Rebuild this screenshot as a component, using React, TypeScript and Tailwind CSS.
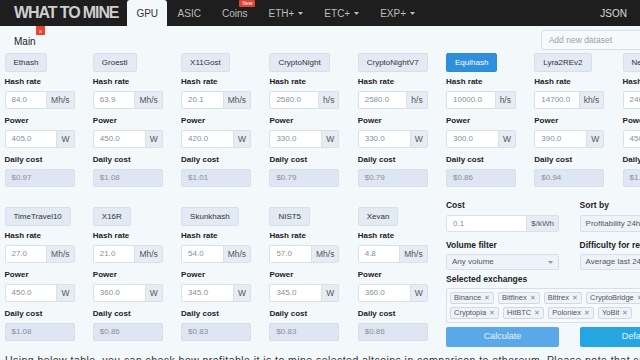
import React from 'react';

type Algo = {
  name: string;
  hash: string;
  unit: string;
  power: string;
  cost: string;
  active?: boolean;
};

const row1: Algo[] = [
  { name: 'Ethash', hash: '84.0', unit: 'Mh/s', power: '405.0', cost: '$0.97' },
  { name: 'Groestl', hash: '63.9', unit: 'Mh/s', power: '450.0', cost: '$1.08' },
  { name: 'X11Gost', hash: '20.1', unit: 'Mh/s', power: '420.0', cost: '$1.01' },
  { name: 'CryptoNight', hash: '2580.0', unit: 'h/s', power: '330.0', cost: '$0.79' },
  { name: 'CryptoNightV7', hash: '2580.0', unit: 'h/s', power: '330.0', cost: '$0.79' },
  { name: 'Equihash', hash: '10000.0', unit: 'h/s', power: '300.0', cost: '$0.86', active: true },
  { name: 'Lyra2REv2', hash: '14700.0', unit: 'kh/s', power: '390.0', cost: '$0.94' },
  { name: 'NeoScrypt', hash: '2460.0', unit: 'kh/s', power: '450.0', cost: '$1.08' },
];

const row2: Algo[] = [
  { name: 'TimeTravel10', hash: '27.0', unit: 'Mh/s', power: '450.0', cost: '$1.08' },
  { name: 'X16R', hash: '21.0', unit: 'Mh/s', power: '360.0', cost: '$0.86' },
  { name: 'Skunkhash', hash: '54.0', unit: 'Mh/s', power: '345.0', cost: '$0.83' },
  { name: 'NIST5', hash: '57.0', unit: 'Mh/s', power: '345.0', cost: '$0.83' },
  { name: 'Xevan', hash: '4.8', unit: 'Mh/s', power: '360.0', cost: '$0.86' },
];

const exchanges1 = ['Binance', 'Bitfinex', 'Bittrex', 'CryptoBridge'];
const exchanges2 = ['Cryptopia', 'HitBTC', 'Poloniex', 'YoBit'];

function Caret() {
  return (
    <svg width="5" height="3" viewBox="0 0 5 3" className="ml-[4px] inline-block">
      <path d="M0 0h5L2.5 3z" fill="currentColor" />
    </svg>
  );
}

function InputGroup({ value, unit }: { value: string; unit: string }) {
  return (
    <div className="flex h-[18px] w-full rounded-[2px] border border-[#d8e0ea] overflow-hidden">
      <div className="flex-1 bg-white pl-[6px] flex items-center text-[8px] text-[#8a8f95]">{value}</div>
      <div className="flex items-center border-l border-[#d8e0ea] bg-[#e6ecf4] px-[4px] text-[8.5px] text-[#555]">
        {unit}
      </div>
    </div>
  );
}

function Label({ children, first }: { children: React.ReactNode; first?: boolean }) {
  return (
    <div
      className={
        (first ? 'mt-[4px] mb-[3px]' : 'mt-[6px] mb-[3px]') +
        ' h-[12px] leading-[12px] text-[8px] font-bold text-[#222] whitespace-nowrap'
      }
    >
      {children}
    </div>
  );
}

function AlgoCard({ a, top }: { a: Algo; top?: boolean }) {
  return (
    <div className={'w-[70px] ' + (top ? 'pt-[6px]' : '')}>
      <div
        className={
          'flex w-fit h-[19px] items-center rounded-[2px] border px-[8px] text-[8px] whitespace-nowrap ' +
          (a.active
            ? 'border-[#2b8bd6] bg-[#2e90dc] text-white'
            : 'border-[#d6dfeb] bg-[#e2eaf4] text-[#333]')
        }
      >
        {a.name}
      </div>
      <Label first>Hash rate</Label>
      <InputGroup value={a.hash} unit={a.unit} />
      <Label>Power</Label>
      <InputGroup value={a.power} unit="W" />
      <Label>Daily cost</Label>
      <div className="flex h-[18px] items-center rounded-[2px] border border-[#d6dfeb] bg-[#dde6f2] pl-[6px] text-[8px] text-[#8a8f95]">
        {a.cost}
      </div>
    </div>
  );
}

function Tag({ name }: { name: string }) {
  return (
    <span className="inline-flex h-[12px] items-center gap-[3px] rounded-[2px] border border-[#cfd8e3] bg-[#eef3f9] px-[3px] text-[7.5px] text-[#555] whitespace-nowrap">
      {name}
      <span className="text-[#888] text-[7px]">✕</span>
    </span>
  );
}

function SelectBox({ text, caret }: { text: string; caret?: boolean }) {
  return (
    <div className="flex h-[16px] items-center justify-between rounded-[2px] border border-[#d6dfeb] bg-[#eef3f9] px-[5px] text-[8px] text-[#555] whitespace-nowrap">
      {text}
      {caret && (
        <svg width="5" height="3" viewBox="0 0 5 3" className="text-[#999]">
          <path d="M0 0h5L2.5 3z" fill="currentColor" />
        </svg>
      )}
    </div>
  );
}

function PanelLabel({ children }: { children: React.ReactNode }) {
  return (
    <div className="h-[12px] leading-[12px] text-[8.5px] font-bold text-[#222] whitespace-nowrap">{children}</div>
  );
}

export default function App() {
  const tabs = ['ASIC', 'Coins', 'ETH+', 'ETC+', 'EXP+'];

  return (
    <div className="relative h-[360px] w-[640px] overflow-hidden bg-[#f3f8fb] [font-family:'Liberation_Sans',Arial,sans-serif]">
      {/* navbar */}
      <div className="flex h-[26px] w-[640px] items-stretch bg-[#1e1e1e]">
        <div className="ml-[14px] mr-[9px] flex items-center text-[16px] font-bold tracking-[-1.1px] text-[#cfcfcf]">
          WHAT TO MINE
        </div>
        <div className="flex items-center rounded-t-[3px] bg-[#f3f8fb] px-[9px] text-[10px] text-[#333]">GPU</div>
        {tabs.map((t) => (
          <div key={t} className="relative flex items-center px-[10.5px] text-[10px] text-[#bdbdbd]">
            {t}
            {t.endsWith('+') && <Caret />}
            {t === 'Coins' && (
              <span className="absolute left-[28px] top-0 rounded-[1px] bg-[#dc4437] px-[3px] text-[5px] leading-[7px] text-white">
                New
              </span>
            )}
          </div>
        ))}
        <div className="ml-auto mr-[13px] flex items-center text-[10px] text-[#dcdcdc]">JSON</div>
      </div>

      {/* dataset tabs */}
      <div className="flex h-[27px] w-[720px] items-start">
        <div className="relative ml-[14px] mt-[10px] text-[10px] leading-[12px] text-[#222]">
          Main
          <span className="absolute left-[22px] top-[-10px] flex h-[9px] w-[9px] items-center justify-center bg-[#e8442f] text-[6px] leading-none text-white">
            x
          </span>
        </div>
        <div className="ml-[505px] mt-[4px] flex h-[20px] w-[150px] items-center rounded-[3px] border border-[#d6dee8] bg-[#f7fafc] pl-[7px] text-[8.5px] text-[#9aa0a6]">
          Add new dataset
        </div>
      </div>

      {/* grid */}
      <div className="w-[720px] pl-[4.5px]">
        <div className="flex gap-x-[18.3px]">
          {row1.map((a) => (
            <AlgoCard key={a.name} a={a} />
          ))}
        </div>

        <div className="mt-[14px] flex items-start gap-x-[18.3px]">
          {row2.map((a) => (
            <AlgoCard key={a.name} a={a} top />
          ))}

          {/* settings panel */}
          <div className="w-[246.6px] -mt-[2px]">
            <div className="grid grid-cols-2 gap-x-[20.6px]">
              <div>
                <PanelLabel>Cost</PanelLabel>
                <div className="mt-[4px] flex h-[17px] rounded-[2px] border border-[#d8e0ea] overflow-hidden">
                  <div className="flex flex-1 items-center bg-white pl-[6px] text-[8px] text-[#8a8f95]">0.1</div>
                  <div className="flex items-center border-l border-[#d8e0ea] bg-[#e6ecf4] px-[4px] text-[8px] text-[#555]">
                    $/kWh
                  </div>
                </div>
                <div className="mt-[7px]">
                  <PanelLabel>Volume filter</PanelLabel>
                </div>
                <div className="mt-[3px]">
                  <SelectBox text="Any volume" caret />
                </div>
              </div>
              <div>
                <PanelLabel>Sort by</PanelLabel>
                <div className="mt-[4px] h-[17px]">
                  <div className="flex h-[17px] items-center rounded-[2px] border border-[#d6dfeb] bg-[#eef3f9] px-[5px] text-[8px] text-[#555] whitespace-nowrap">
                    Profitability 24h
                  </div>
                </div>
                <div className="mt-[7px]">
                  <PanelLabel>Difficulty for revenue</PanelLabel>
                </div>
                <div className="mt-[3px]">
                  <SelectBox text="Average last 24h" />
                </div>
              </div>
            </div>

            <div className="mt-[3px]">
              <PanelLabel>Selected exchanges</PanelLabel>
            </div>
            <div className="mt-[3px] flex flex-col gap-[3px] rounded-[2px] border border-[#d6dfeb] bg-[#f7fafc] px-[3px] py-[3px]">
              <div className="flex gap-[4px]">
                {exchanges1.map((e) => (
                  <Tag key={e} name={e} />
                ))}
              </div>
              <div className="flex gap-[4px]">
                {exchanges2.map((e) => (
                  <Tag key={e} name={e} />
                ))}
              </div>
            </div>

            <div className="mt-[4px] grid grid-cols-2 gap-x-[20.6px]">
              <div className="flex h-[20px] items-center justify-center rounded-[2px] bg-[#5ba8e8] text-[9px] text-[#e6f3fd]">
                Calculate
              </div>
              <div className="flex h-[20px] items-center justify-center rounded-[2px] bg-[#25a6e0] text-[9px] text-[#e6f3fd]">
                Default
              </div>
            </div>
          </div>
        </div>
      </div>

      <p className="mt-[6px] whitespace-nowrap pl-[5px] text-[10.5px] tracking-[0.45px] text-[#333]">
        Using below table, you can check how profitable it is to mine selected altcoins in comparison to ethereum. Please note that calculations are based on 24h averages.
      </p>
    </div>
  );
}
